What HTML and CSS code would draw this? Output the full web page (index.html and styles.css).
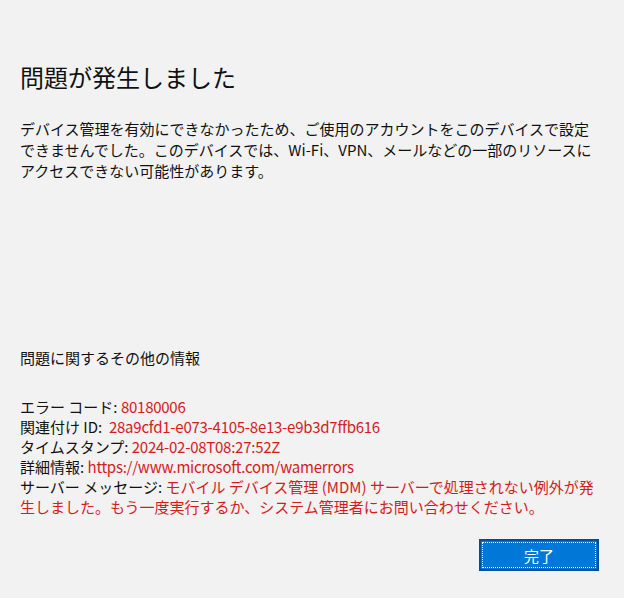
FILE: index.html
```html
<!DOCTYPE html>
<html lang="ja">
<head>
<meta charset="utf-8">
<title>問題が発生しました</title>
<link rel="stylesheet" href="styles.css">
</head>
<body>
<main class="page">
  <h1 class="title">問題が発生しました</h1>
  <p class="desc">デバイス管理を有効にできなかったため、ご使用のアカウントをこのデバイスで設定できませんでした。このデバイスでは、Wi-Fi、VPN、メールなどの一部のリソースにアクセスできない可能性があります。</p>
  <div class="spacer"></div>
  <h2 class="info-head">問題に関するその他の情報</h2>
  <div class="info">
    <div>エラー コード: <span class="err lat">80180006</span></div>
    <div>関連付け ID:&nbsp; <span class="err lat">28a9cfd1-e073-4105-8e13-e9b3d7ffb616</span></div>
    <div>タイムスタンプ: <span class="err lat">2024-02-08T08:27:52Z</span></div>
    <div>詳細情報: <span class="err lat">https://www.microsoft.com/wamerrors</span></div>
    <div class="msg">サーバー メッセージ: <span class="err">モバイル デバイス管理 (MDM) サーバーで処理されない例外が発生しました。もう一度実行するか、システム管理者にお問い合わせください。</span></div>
  </div>
  <div class="actions">
    <button class="btn" type="button">完了</button>
  </div>
</main>
</body>
</html>
```

FILE: styles.css
```css
html, body {
  margin: 0;
  padding: 0;
  background: #f2f2f2;
}
body {
  font-family: "Noto Sans CJK JP", "Noto Sans", sans-serif;
  color: #111111;
  width: 624px;
  height: 598px;
  overflow: hidden;
}
.page {
  padding: 61px 24px 0 20px;
  display: flex;
  flex-direction: column;
}
.title {
  margin: 0;
  font-size: 24px;
  font-weight: 400;
  line-height: 32px;
}
.desc {
  margin: 25px 0 0;
  font-size: 15px;
  line-height: 21px;
}
.lat {
  letter-spacing: -0.25px;
}
.spacer {
  height: 167px;
}
.info-head {
  margin: 0;
  font-size: 15px;
  font-weight: 400;
  line-height: 20px;
}
.info {
  margin-top: 29px;
  font-size: 15px;
  line-height: 20px;
}
.err {
  color: #d41c1c;
}
.actions {
  display: flex;
  justify-content: flex-end;
  margin-top: 22px;
  padding-right: 1px;
}
.btn {
  width: 120px;
  height: 32px;
  background: #0078d7;
  border: 2px solid #004e98;
  color: #fff;
  font-family: "Noto Sans CJK JP", sans-serif;
  font-size: 15px;
  padding: 0;
  outline: 1px dotted #ffffff;
  outline-offset: -4px;
}
```
